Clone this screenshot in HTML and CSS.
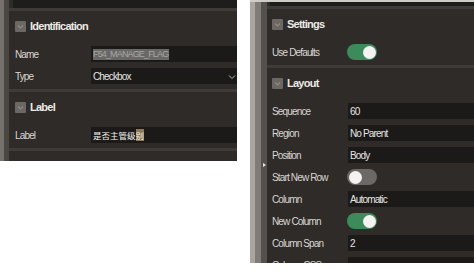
FILE: index.html
```html
<!DOCTYPE html>
<html>
<head>
<meta charset="utf-8">
<link rel="stylesheet" href="styles.css">
</head>
<body>
<div class="page">
  <div class="panel panel-left">
    <div class="rail"><div class="rail-a"></div><div class="rail-b"></div></div>
    <div class="content">
      <div class="stub"></div>
      <div class="sep"></div>
      <section class="sec">
        <div class="sec-head">
          <span class="chev"><svg width="11" height="11" viewBox="0 0 11 11"><path d="M3 4.5 L5.5 7 L8 4.5" fill="none" stroke="#8f8a85" stroke-width="1.2"/></svg></span>
          <span class="title">Identification</span>
        </div>
        <div class="row"><span class="lbl">Name</span><div class="field"><span class="sel">F54_MANAGE_FLAG</span></div></div>
        <div class="row"><span class="lbl">Type</span><div class="field field-select"><span>Checkbox</span><svg class="caret" width="8" height="6" viewBox="0 0 8 6"><path d="M1 1.5 L4 4.5 L7 1.5" fill="none" stroke="#bdb8b3" stroke-width="1"/></svg></div></div>
      </section>
      <div class="sep"></div>
      <section class="sec">
        <div class="sec-head">
          <span class="chev"><svg width="11" height="11" viewBox="0 0 11 11"><path d="M3 4.5 L5.5 7 L8 4.5" fill="none" stroke="#8f8a85" stroke-width="1.2"/></svg></span>
          <span class="title">Label</span>
        </div>
        <div class="row"><span class="lbl">Label</span><div class="field"><span class="cjk">是否主管级<span class="cur">别</span></span></div></div>
      </section>
      <div class="sep"></div>
      <section class="sec">
        <div class="sec-head">
          <span class="chev"><svg width="11" height="11" viewBox="0 0 11 11"><path d="M3 4.5 L5.5 7 L8 4.5" fill="none" stroke="#8f8a85" stroke-width="1.2"/></svg></span>
        </div>
      </section>
    </div>
  </div>

  <div class="panel panel-right">
    <div class="rail"><div class="rail-c"></div><div class="rail-d"></div><div class="rail-e"><span class="handle"></span></div></div>
    <div class="content">
      <div class="stub stub-r"></div>
      <div class="sep"></div>
      <section class="sec">
        <div class="sec-head">
          <span class="chev"><svg width="11" height="11" viewBox="0 0 11 11"><path d="M3 4.5 L5.5 7 L8 4.5" fill="none" stroke="#8f8a85" stroke-width="1.2"/></svg></span>
          <span class="title">Settings</span>
        </div>
        <div class="row"><span class="lbl">Use Defaults</span><span class="toggle on"><span class="knob"></span></span></div>
      </section>
      <div class="sep"></div>
      <section class="sec">
        <div class="sec-head">
          <span class="chev"><svg width="11" height="11" viewBox="0 0 11 11"><path d="M3 4.5 L5.5 7 L8 4.5" fill="none" stroke="#8f8a85" stroke-width="1.2"/></svg></span>
          <span class="title">Layout</span>
        </div>
        <div class="row"><span class="lbl">Sequence</span><div class="field"><span>60</span></div></div>
        <div class="row"><span class="lbl">Region</span><div class="field"><span>No Parent</span></div></div>
        <div class="row"><span class="lbl">Position</span><div class="field"><span>Body</span></div></div>
        <div class="row"><span class="lbl">Start New Row</span><span class="toggle"><span class="knob"></span></span></div>
        <div class="row"><span class="lbl">Column</span><div class="field"><span>Automatic</span></div></div>
        <div class="row"><span class="lbl">New Column</span><span class="toggle on"><span class="knob"></span></span></div>
        <div class="row"><span class="lbl">Column Span</span><div class="field"><span>2</span></div></div>
        <div class="row"><span class="lbl">Column CSS</span><div class="field"></div></div>
      </section>
    </div>
  </div>
</div>
</body>
</html>
```
FILE: styles.css
```css
html, body {
  margin: 0;
  padding: 0;
  background: #ffffff;
}
body {
  font-family: "Liberation Sans", Arial, sans-serif;
  font-size: 10px;
  letter-spacing: -0.85px;
  color: #d9d6d2;
}
.page {
  display: flex;
  align-items: flex-start;
  gap: 13px;
  width: 474px;
}
.panel {
  display: flex;
  overflow: hidden;
  background: #2e2b28;
}
.panel-left {
  width: 237px;
  height: 161px;
}
.panel-right {
  width: 224px;
  height: 261px;
  border-top: 2px solid #cfcbc7;
}
.rail {
  display: flex;
  flex: none;
}
.rail-a { width: 4px; background: #75716c; }
.rail-b { width: 5px; background: #4a4642; }
.rail-c { width: 5px; background: #aaa5a0; }
.rail-d { width: 6px; background: #807b76; }
.rail-e {
  width: 6px;
  background: #54504c;
  position: relative;
}
.handle {
  position: absolute;
  left: 2px;
  top: 161px;
  width: 0;
  height: 0;
  border-top: 2.5px solid transparent;
  border-bottom: 2.5px solid transparent;
  border-left: 3px solid #e8e6e3;
}
.content {
  flex: 1;
  min-width: 0;
  display: block;
}
.panel-left .content { padding-left: 6px; }
.panel-right .content { padding-left: 5px; }
.stub {
  height: 8px;
  background: #1f1d1b;
  margin-left: -2px;
}
.stub-r { height: 4px; }
.sep {
  height: 3px;
  background: #3f3b38;
  margin-left: -6px;
}
.panel-right .sep { margin-left: -5px; }
.sec {
  padding-bottom: 2px;
}
.sec-head {
  height: 32px;
  box-sizing: border-box;
  padding-top: 10px;
  display: flex;
  align-items: flex-start;
  gap: 4px;
}
.chev {
  width: 11px;
  height: 11px;
  background: #6b6763;
  border-radius: 1px;
  display: block;
  flex: none;
}
.chev svg { display: block; }
.title {
  font-size: 11px;
  font-weight: bold;
  letter-spacing: -0.75px;
  color: #ebe9e6;
  line-height: 11px;
}
.row {
  height: 22px;
  display: flex;
  align-items: center;
}
.lbl {
  width: 76px;
  flex: none;
  white-space: nowrap;
}
.field {
  flex: 1;
  height: 16px;
  background: #1c1a18;
  display: flex;
  align-items: center;
  padding-left: 2px;
  color: #e6e4e1;
  white-space: nowrap;
  overflow: hidden;
}
.field-select {
  position: relative;
}
.caret {
  position: absolute;
  right: 1px;
  top: 6px;
}
.sel {
  background: #6a6866;
  color: #a8a6a3;
  font-size: 9px;
  padding: 1px 1px 1px 0;
  line-height: 9px;
}
.cjk {
  font-family: "Noto Sans CJK SC", sans-serif;
  font-size: 8.5px;
  letter-spacing: 0;
  color: #f2f0ed;
}
.cur {
  background: #8a7a5a;
}
.toggle {
  width: 30px;
  height: 16px;
  border-radius: 8px;
  background: #6b6865;
  display: flex;
  align-items: center;
  padding: 0 1.5px;
  box-sizing: border-box;
  margin-left: -1px;
}
.toggle.on {
  background: #3d8a5b;
  justify-content: flex-end;
}
.knob {
  width: 13px;
  height: 13px;
  border-radius: 50%;
  background: #f4f3f1;
}
```
